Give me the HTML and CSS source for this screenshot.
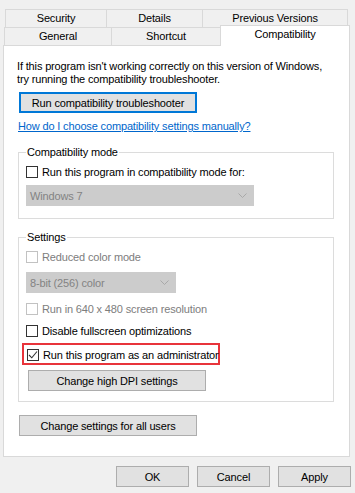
FILE: index.html
```html
<!DOCTYPE html>
<html>
<head>
<meta charset="utf-8">
<link rel="stylesheet" href="styles.css">
</head>
<body>
<div class="dialog">
  <div class="tabs">
    <div class="tabrow top">
      <div class="tab w-sec">Security</div>
      <div class="tab w-det">Details</div>
      <div class="tab w-prev">Previous Versions</div>
    </div>
    <div class="tabrow bottom">
      <div class="tab w-gen">General</div>
      <div class="tab w-short">Shortcut</div>
      <div class="tab active w-compat">Compatibility</div>
    </div>
  </div>
  <div class="panel">
    <p class="intro">If this program isn't working correctly on this version of Windows,<br>try running the compatibility troubleshooter.</p>
    <button class="btn focus troubleshoot">Run compatibility troubleshooter</button>
    <a class="link" href="#">How do I choose compatibility settings manually?</a>

    <fieldset class="group g1">
      <legend>Compatibility mode</legend>
      <div class="check first"><span class="box"></span><span>Run this program in compatibility mode for:</span></div>
      <div class="select wide"><span>Windows 7</span><svg class="chev" width="9" height="5" viewBox="0 0 9 5"><polyline points="0.5,0.5 4.5,4.5 8.5,0.5" fill="none" stroke="#a9a9a9" stroke-width="1"/></svg></div>
    </fieldset>

    <fieldset class="group g2">
      <legend>Settings</legend>
      <div class="check first disabled"><span class="box"></span><span>Reduced color mode</span></div>
      <div class="select narrow"><span>8-bit (256) color</span><svg class="chev" width="9" height="5" viewBox="0 0 9 5"><polyline points="0.5,0.5 4.5,4.5 8.5,0.5" fill="none" stroke="#a9a9a9" stroke-width="1"/></svg></div>
      <div class="check res disabled"><span class="box"></span><span>Run in 640 x 480 screen resolution</span></div>
      <div class="check full"><span class="box"></span><span>Disable fullscreen optimizations</span></div>
      <div class="highlight">
        <div class="check admin"><span class="box"><svg width="10" height="10" viewBox="0 0 10 10"><polyline points="1,5 3.8,7.8 9,1.5" fill="none" stroke="#333" stroke-width="1.1"/></svg></span><span>Run this program as an administrator</span></div>
      </div>
      <button class="btn dpi">Change high DPI settings</button>
    </fieldset>

    <button class="btn allusers">Change settings for all users</button>
  </div>
  <div class="actions">
    <button class="btn small">OK</button>
    <button class="btn small">Cancel</button>
    <button class="btn small">Apply</button>
  </div>
</div>
</body>
</html>
```

FILE: styles.css
```css
html, body {
  margin: 0;
  padding: 0;
}
body {
  background: #f0f0f0;
  font-family: "Liberation Sans", Arial, sans-serif;
  font-size: 11px;
  letter-spacing: -0.15px;
  color: #000;
}
.dialog {
  width: 355px;
  height: 493px;
  padding-top: 9px;
  box-sizing: border-box;
  overflow: hidden;
}
.tabrow {
  display: flex;
  align-items: flex-start;
  height: 18px;
}
.tabrow.top { margin-left: 5px; }
.tabrow.bottom { margin-left: 4px; }
.tab {
  box-sizing: border-box;
  height: 18px;
  border: 1px solid #d9d9d9;
  border-bottom: none;
  margin-left: -1px;
  text-align: center;
  line-height: 17px;
  background: #f0f0f0;
  white-space: nowrap;
}
.tabrow .tab:first-child { margin-left: 0; }
.w-sec { width: 102px; }
.w-det { width: 97px; }
.w-prev { width: 146px; }
.w-gen { width: 108px; }
.w-short { width: 110px; }
.w-compat { width: 130px; }
.tab.active {
  height: 21px;
  margin-top: -2px;
  margin-bottom: -1px;
  background: #fff;
  position: relative;
  z-index: 1;
  line-height: 15px;
  padding-top: 1px;
}
.panel {
  margin-left: 3px;
  width: 347px;
  box-sizing: border-box;
  border: 1px solid #d9d9d9;
  background: #fff;
  padding: 14px 0 20px 0;
}
.intro {
  margin: 0 0 0 13px;
  line-height: 13px;
}
.btn {
  display: block;
  box-sizing: border-box;
  height: 21px;
  padding: 0;
  border: 1px solid #adadad;
  background: #e1e1e1;
  font-family: inherit;
  font-size: 11px;
  letter-spacing: -0.15px;
  color: #000;
  text-align: center;
}
.btn.focus {
  border: 2px solid #0078d7;
}
.troubleshoot {
  width: 178px;
  margin: 6px 0 0 15px;
}
.link {
  display: block;
  margin: 7px 0 0 14px;
  line-height: 13px;
  color: #0066cc;
  text-decoration: underline;
  width: max-content;
}
.group {
  box-sizing: border-box;
  width: 316px;
  margin: 0 0 0 14px;
  border: 1px solid #dcdcdc;
  padding: 0 7px 12px 7px;
  min-width: 0;
}
.group legend {
  padding: 0 1px;
  line-height: 15px;
}
.g1 { margin-top: 12px; }
.g2 { margin-top: 11px; padding-bottom: 10px; }
.check {
  display: flex;
  align-items: center;
  height: 15px;
  gap: 4px;
  white-space: nowrap;
}
.check.first { margin-top: 4px; }
.check.res { margin-top: 8px; }
.check.full { margin-top: 7px; }
.box {
  box-sizing: border-box;
  width: 12px;
  height: 12px;
  border: 1px solid #333;
  background: #fff;
  display: flex;
  align-items: center;
  justify-content: center;
  flex: none;
}
.check.disabled { color: #7d7d7d; }
.check.disabled .box { border-color: #c2c2c2; }
.select {
  box-sizing: border-box;
  height: 21px;
  background: #cccccc;
  border: 1px solid #cccccc;
  color: #838383;
  display: flex;
  align-items: center;
  justify-content: space-between;
  padding: 0 6px 0 3px;
}
.select.wide { width: 228px; margin-top: 6px; }
.select.narrow { width: 150px; margin-top: 8px; }
.chev { display: block; }
.highlight {
  box-sizing: border-box;
  width: 198px;
  margin: 5px 0 0 -4px;
  border: 2px solid #e8343b;
  padding: 2px 0 1px 3px;
}
.dpi {
  width: 178px;
  margin: 5px 0 0 2px;
}
.allusers {
  width: 178px;
  margin: 13px 0 0 15px;
}
.actions {
  display: flex;
  justify-content: flex-end;
  gap: 8px;
  margin-top: 9px;
  padding-right: 4px;
}
.btn.small {
  width: 73px;
}
```
